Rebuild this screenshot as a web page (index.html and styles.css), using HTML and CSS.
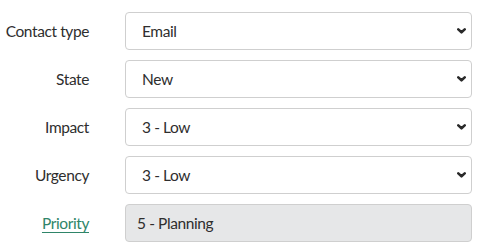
FILE: index.html
```html
<!DOCTYPE html>
<html>
<head>
<meta charset="utf-8">
<link rel="stylesheet" href="styles.css">
</head>
<body>
<div class="form">
  <label class="label">Contact type</label>
  <div class="field"><span class="value">Email</span><svg class="chev" viewBox="0 0 9 6"><path d="M1.3 1.4 L4.5 4.3 L7.7 1.4" /></svg></div>
  <label class="label">State</label>
  <div class="field"><span class="value">New</span><svg class="chev" viewBox="0 0 9 6"><path d="M1.3 1.4 L4.5 4.3 L7.7 1.4" /></svg></div>
  <label class="label">Impact</label>
  <div class="field"><span class="value">3 - Low</span><svg class="chev" viewBox="0 0 9 6"><path d="M1.3 1.4 L4.5 4.3 L7.7 1.4" /></svg></div>
  <label class="label">Urgency</label>
  <div class="field"><span class="value">3 - Low</span><svg class="chev" viewBox="0 0 9 6"><path d="M1.3 1.4 L4.5 4.3 L7.7 1.4" /></svg></div>
  <label class="label"><a class="link">Priority</a></label>
  <div class="field readonly"><span class="value">5 - Planning</span></div>
</div>
</body>
</html>
```
FILE: styles.css
```css
html, body {
  margin: 0;
  padding: 0;
  background: #ffffff;
}
body {
  font-family: Lato, "Open Sans", sans-serif;
  font-size: 15.5px;
  letter-spacing: -0.4px;
  color: #2e2e2e;
}
.form {
  display: grid;
  grid-template-columns: 89px 1fr;
  column-gap: 36px;
  row-gap: 10px;
  padding: 12px 8px 0 0;
}
.label {
  display: flex;
  align-items: center;
  justify-content: flex-end;
  height: 38px;
  white-space: nowrap;
}
.link {
  color: #2f8569;
  text-decoration: underline;
  text-underline-offset: 3px;
}
.field {
  box-sizing: border-box;
  height: 38px;
  border: 1px solid #cfcfcf;
  border-radius: 4px;
  display: flex;
  align-items: center;
  padding: 0 5px 0 16px;
  background: #fff;
}
.value {
  flex: 1;
}
.chev {
  width: 9px;
  height: 6px;
  fill: none;
  stroke: #2a2a2a;
  stroke-width: 2.6;
  stroke-linecap: round;
  stroke-linejoin: round;
}
.readonly {
  background: #e6e7e8;
  padding-left: 11px;
}
```
